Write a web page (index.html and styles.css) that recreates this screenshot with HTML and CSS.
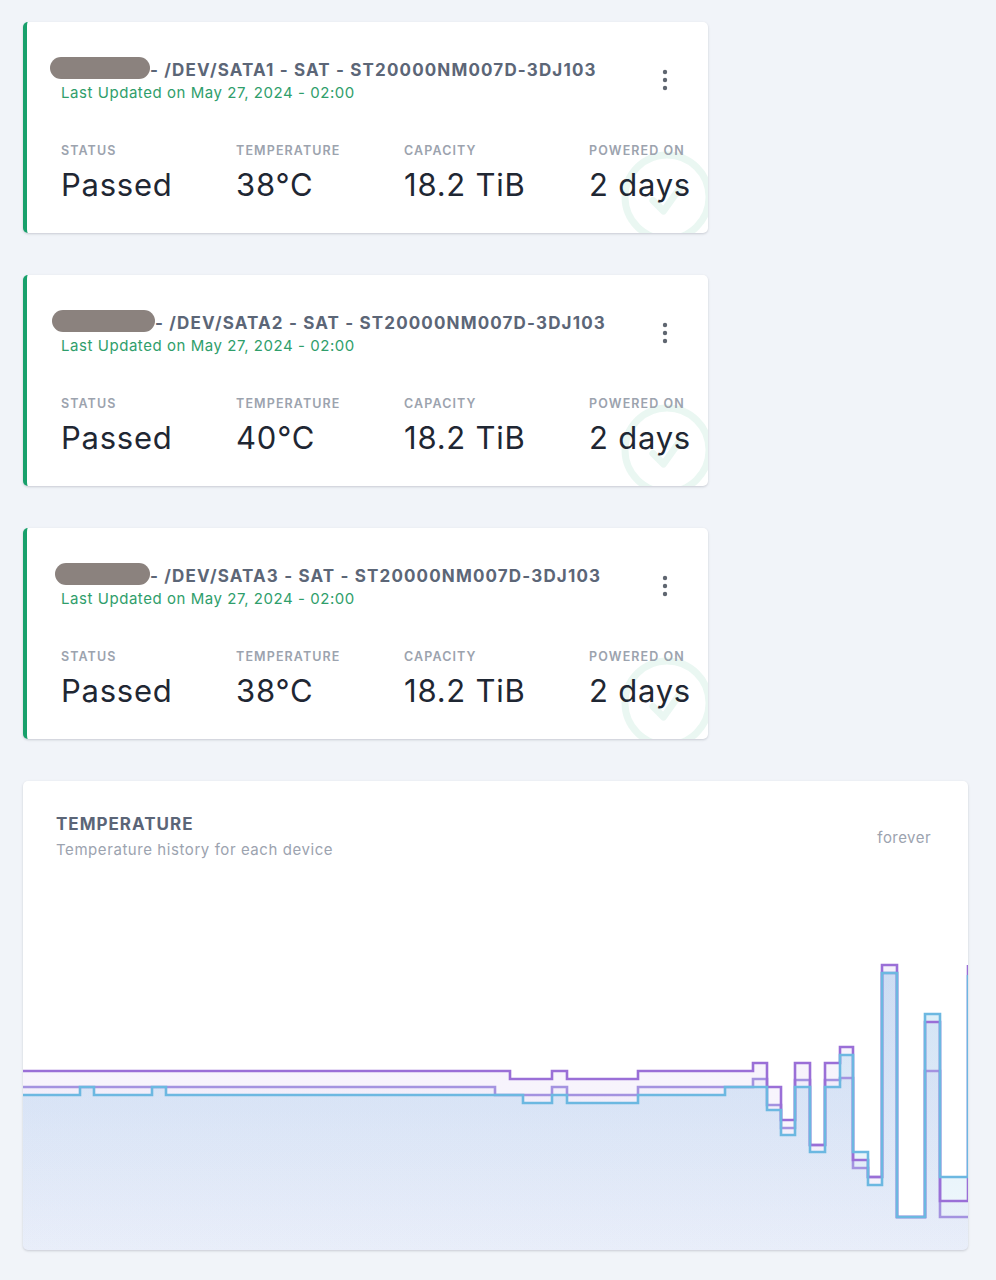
FILE: index.html
```html
<!DOCTYPE html>
<html lang="en">
<head>
<meta charset="utf-8">
<title>Devices</title>
<link rel="stylesheet" href="styles.css">
</head>
<body>
<main class="page">

  <article class="device-card">
    <svg class="watermark" viewBox="0 0 24 24" fill="none" aria-hidden="true"><circle cx="12" cy="12" r="9"/><path d="M9 12.75 11.25 15 15 9.75"/></svg>
    <div class="device-head">
      <div class="device-info">
        <h2 class="device-title"><span class="redact"></span>- /DEV/SATA1 - SAT - ST20000NM007D-3DJ103</h2>
        <p class="device-updated">Last Updated on May 27, 2024 - 02:00</p>
      </div>
      <button class="menu-btn" aria-label="Menu"><svg viewBox="0 0 24 24"><circle cx="12" cy="4" r="2.2"/><circle cx="12" cy="12" r="2.2"/><circle cx="12" cy="20" r="2.2"/></svg></button>
    </div>
    <div class="stats">
      <div class="stat"><div class="stat-label">Status</div><div class="stat-value">Passed</div></div>
      <div class="stat"><div class="stat-label">Temperature</div><div class="stat-value">38°C</div></div>
      <div class="stat"><div class="stat-label">Capacity</div><div class="stat-value">18.2 TiB</div></div>
      <div class="stat"><div class="stat-label">Powered On</div><div class="stat-value">2 days</div></div>
    </div>
  </article>

  <article class="device-card">
    <svg class="watermark" viewBox="0 0 24 24" fill="none" aria-hidden="true"><circle cx="12" cy="12" r="9"/><path d="M9 12.75 11.25 15 15 9.75"/></svg>
    <div class="device-head">
      <div class="device-info">
        <h2 class="device-title"><span class="redact redact-wide"></span>- /DEV/SATA2 - SAT - ST20000NM007D-3DJ103</h2>
        <p class="device-updated">Last Updated on May 27, 2024 - 02:00</p>
      </div>
      <button class="menu-btn" aria-label="Menu"><svg viewBox="0 0 24 24"><circle cx="12" cy="4" r="2.2"/><circle cx="12" cy="12" r="2.2"/><circle cx="12" cy="20" r="2.2"/></svg></button>
    </div>
    <div class="stats">
      <div class="stat"><div class="stat-label">Status</div><div class="stat-value">Passed</div></div>
      <div class="stat"><div class="stat-label">Temperature</div><div class="stat-value">40°C</div></div>
      <div class="stat"><div class="stat-label">Capacity</div><div class="stat-value">18.2 TiB</div></div>
      <div class="stat"><div class="stat-label">Powered On</div><div class="stat-value">2 days</div></div>
    </div>
  </article>

  <article class="device-card">
    <svg class="watermark" viewBox="0 0 24 24" fill="none" aria-hidden="true"><circle cx="12" cy="12" r="9"/><path d="M9 12.75 11.25 15 15 9.75"/></svg>
    <div class="device-head">
      <div class="device-info">
        <h2 class="device-title"><span class="redact redact-narrow"></span>- /DEV/SATA3 - SAT - ST20000NM007D-3DJ103</h2>
        <p class="device-updated">Last Updated on May 27, 2024 - 02:00</p>
      </div>
      <button class="menu-btn" aria-label="Menu"><svg viewBox="0 0 24 24"><circle cx="12" cy="4" r="2.2"/><circle cx="12" cy="12" r="2.2"/><circle cx="12" cy="20" r="2.2"/></svg></button>
    </div>
    <div class="stats">
      <div class="stat"><div class="stat-label">Status</div><div class="stat-value">Passed</div></div>
      <div class="stat"><div class="stat-label">Temperature</div><div class="stat-value">38°C</div></div>
      <div class="stat"><div class="stat-label">Capacity</div><div class="stat-value">18.2 TiB</div></div>
      <div class="stat"><div class="stat-label">Powered On</div><div class="stat-value">2 days</div></div>
    </div>
  </article>

  <section class="chart-card">
    <div class="chart-head">
      <div>
        <h2 class="chart-title">Temperature</h2>
        <p class="chart-sub">Temperature history for each device</p>
      </div>
      <span class="chart-range">forever</span>
    </div>
    <svg class="chart" viewBox="23 870 945 380" preserveAspectRatio="none" aria-label="Temperature history chart">
      <defs>
        <linearGradient id="gA" x1="0" y1="0" x2="0" y2="1">
          <stop offset="0" stop-color="#9b72d9" stop-opacity="0.1"/>
          <stop offset="1" stop-color="#9b72d9" stop-opacity="0.05"/>
        </linearGradient>
        <linearGradient id="gB" x1="0" y1="0" x2="0" y2="1">
          <stop offset="0" stop-color="#a68fe0" stop-opacity="0.08"/>
          <stop offset="1" stop-color="#a68fe0" stop-opacity="0.04"/>
        </linearGradient>
        <linearGradient id="gC" x1="0" y1="0" x2="0" y2="1">
          <stop offset="0" stop-color="#6ab8e2" stop-opacity="0.26"/>
          <stop offset="1" stop-color="#6ab8e2" stop-opacity="0.1"/>
        </linearGradient>
      </defs>
      <path class="fill-a" d="M23 1071 H510 V1079 H552 V1071 H567 V1079 H638 V1071 H753 V1063 H767 V1087 H781 V1120 H795 V1063 H810 V1145 H825 V1063 H840 V1047 H853 V1160 H868 V1177 H882 V965 H897 V1217 H925 V1022 H940 V1201 H968 V1250 H23 Z"/>
      <path class="fill-b" d="M23 1087 H495 V1095 H552 V1087 H567 V1095 H638 V1087 H753 V1079 H767 V1105 H781 V1128 H795 V1080 H810 V1145 H825 V1080 H840 V1078 H853 V1168 H868 V1177 H882 V973 H897 V1217 H925 V1071 H940 V1217 H968 V1250 H23 Z"/>
      <path class="fill-c" d="M23 1095 H80 V1087 H94 V1095 H152 V1087 H166 V1095 H523 V1103 H552 V1095 H567 V1103 H638 V1095 H725 V1087 H767 V1110 H781 V1135 H795 V1087 H810 V1152 H825 V1087 H840 V1055 H853 V1152 H868 V1185 H882 V973 H897 V1217 H925 V1014 H940 V1177 H968 V1250 H23 Z"/>
      <path class="line-b" d="M23 1087 H495 V1095 H552 V1087 H567 V1095 H638 V1087 H753 V1079 H767 V1105 H781 V1128 H795 V1080 H810 V1145 H825 V1080 H840 V1078 H853 V1168 H868 V1177 H882 V973 H897 V1217 H925 V1071 H940 V1217 H968"/>
      <path class="line-a" d="M23 1071 H510 V1079 H552 V1071 H567 V1079 H638 V1071 H753 V1063 H767 V1087 H781 V1120 H795 V1063 H810 V1145 H825 V1063 H840 V1047 H853 V1160 H868 V1177 H882 V965 H897 V1217 H925 V1022 H940 V1201 H968 V965"/>
      <path class="line-c" d="M23 1095 H80 V1087 H94 V1095 H152 V1087 H166 V1095 H523 V1103 H552 V1095 H567 V1103 H638 V1095 H725 V1087 H767 V1110 H781 V1135 H795 V1087 H810 V1152 H825 V1087 H840 V1055 H853 V1152 H868 V1185 H882 V973 H897 V1217 H925 V1014 H940 V1177 H968 V975"/>
    </svg>
  </section>

</main>
</body>
</html>
```

FILE: styles.css
```css
* { box-sizing: border-box; }

html, body {
  margin: 0;
  padding: 0;
  background: #f1f4f9;
}

body {
  font-family: Inter, "Noto Sans", "Liberation Sans", sans-serif;
  color: #1f2733;
}

.page {
  padding: 22px 0 30px 23px;
  display: flex;
  flex-direction: column;
  align-items: flex-start;
}

.device-card {
  position: relative;
  overflow: hidden;
  width: 685px;
  height: 211px;
  margin-bottom: 42px;
  padding: 35px 17px 0 34px;
  background: #ffffff;
  border-left: 4px solid #18a06b;
  border-radius: 5px;
  box-shadow: 0 1px 3px rgba(15, 23, 42, 0.12), 0 1px 2px rgba(15, 23, 42, 0.06);
}

.watermark {
  position: absolute;
  right: -15px;
  bottom: -20px;
  width: 112px;
  height: 112px;
  stroke: #19a36e;
  stroke-opacity: 0.09;
  stroke-width: 1.5;
  stroke-linecap: round;
  stroke-linejoin: round;
  pointer-events: none;
}

.device-head {
  position: relative;
  display: flex;
  align-items: center;
  justify-content: space-between;
}

.device-title {
  margin: 0;
  font-size: 17px;
  line-height: 24px;
  height: 24px;
  font-weight: 700;
  color: #5c6677;
  text-transform: uppercase;
  letter-spacing: 1.15px;
  white-space: nowrap;
}

.redact {
  display: inline-block;
  width: 100px;
  height: 22px;
  margin-left: -11px;
  vertical-align: -3px;
  border-radius: 11px;
  background: #8b827e;
  filter: blur(0.6px);
}

.redact-wide { width: 103px; margin-left: -9px; }
.redact-narrow { width: 95px; margin-left: -6px; }

.device-updated {
  margin: 2px 0 0;
  font-size: 15px;
  line-height: 20px;
  letter-spacing: 0.55px;
  color: #2f9e6b;
}

.menu-btn {
  width: 24px;
  height: 24px;
  margin-right: 14px;
  padding: 0;
  border: 0;
  background: none;
  fill: #5f6670;
}

.menu-btn svg {
  display: block;
  width: 24px;
  height: 24px;
}

.stats {
  position: relative;
  display: flex;
  justify-content: space-between;
  margin-top: 40px;
}

.stat-label {
  font-size: 12.5px;
  line-height: 16px;
  font-weight: 600;
  letter-spacing: 1.1px;
  text-transform: uppercase;
  color: #9ca3ae;
}

.stat-value {
  margin-top: 8px;
  font-size: 31px;
  line-height: 36px;
  letter-spacing: 0.75px;
  color: #1f2733;
}

.chart-card {
  width: 945px;
  height: 469px;
  overflow: hidden;
  background: #ffffff;
  border-radius: 5px;
  box-shadow: 0 1px 3px rgba(15, 23, 42, 0.12), 0 1px 2px rgba(15, 23, 42, 0.06);
  display: flex;
  flex-direction: column;
}

.chart-head {
  height: 89px;
  padding: 31px 37px 0 33px;
  display: flex;
  justify-content: space-between;
  align-items: flex-start;
}

.chart-title {
  margin: 0;
  font-size: 17px;
  line-height: 24px;
  font-weight: 700;
  letter-spacing: 1px;
  text-transform: uppercase;
  color: #5b6577;
}

.chart-sub {
  margin: 4px 0 0;
  font-size: 15px;
  line-height: 20px;
  letter-spacing: 0.57px;
  color: #9ca3af;
}

.chart-range {
  margin-top: 16px;
  font-size: 15px;
  line-height: 20px;
  letter-spacing: 0.45px;
  color: #9ca3af;
}

.chart {
  display: block;
  width: 945px;
  height: 380px;
}

.fill-a { fill: url(#gA); }
.fill-b { fill: url(#gB); }
.fill-c { fill: url(#gC); }

.line-a, .line-b, .line-c {
  fill: none;
  stroke-width: 2.6;
  stroke-linejoin: miter;
}

.line-a { stroke: #9a6fd7; }
.line-b { stroke: #a493e0; }
.line-c { stroke: #6cb8e1; }
```
